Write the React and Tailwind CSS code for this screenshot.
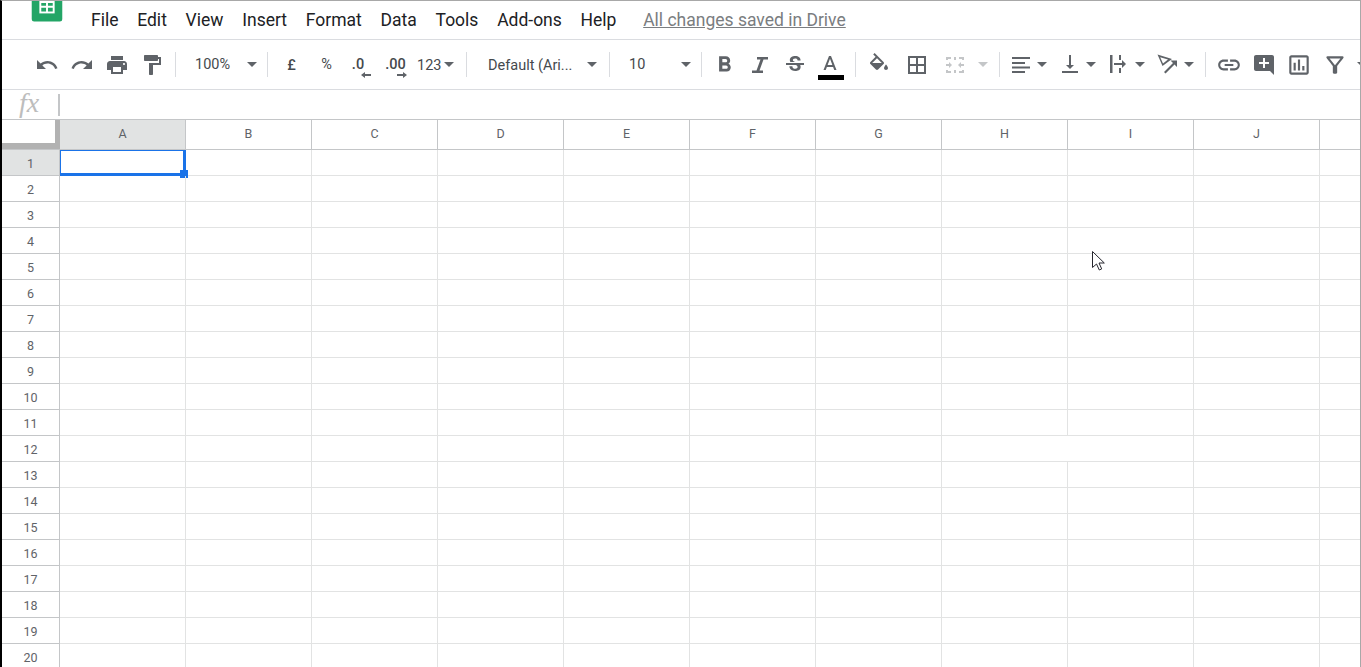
import React from "react";

const P = {
  undo: "M12.5 8c-2.65 0-5.05.99-6.9 2.6L2 7v9h9l-3.62-3.62c1.39-1.16 3.16-1.88 5.12-1.88 3.54 0 6.55 2.31 7.6 5.5l2.37-.78C21.08 11.03 17.15 8 12.5 8z",
  redo: "M18.4 10.6C16.55 8.99 14.15 8 11.5 8c-4.65 0-8.58 3.03-9.96 7.22L3.9 16c1.05-3.19 4.05-5.5 7.6-5.5 1.95 0 3.73.72 5.12 1.88L13 16h9V7l-3.6 3.6z",
  print: "M19 8H5c-1.66 0-3 1.34-3 3v6h4v4h12v-4h4v-6c0-1.66-1.34-3-3-3zm-3 11H8v-5h8v5zm3-7c-.55 0-1-.45-1-1s.45-1 1-1 1 .45 1 1-.45 1-1 1zm-1-9H6v4h12V3z",
  paint: "M18 4V3c0-.55-.45-1-1-1H5c-.55 0-1 .45-1 1v4c0 .55.45 1 1 1h12c.55 0 1-.45 1-1V6h1v4H9v11c0 .55.45 1 1 1h2c.55 0 1-.45 1-1v-9h8V4h-3z",
  bold: "M15.6 10.79c.97-.67 1.65-1.77 1.65-2.79 0-2.26-1.75-4-4-4H7v14h7.04c2.09 0 3.71-1.7 3.71-3.79 0-1.52-.86-2.82-2.15-3.42zM10 6.5h3c.83 0 1.5.67 1.5 1.5s-.67 1.5-1.5 1.5h-3v-3zm3.5 9H10v-3h3.5c.83 0 1.5.67 1.5 1.5s-.67 1.5-1.5 1.5z",
  italic: "M9 4v2.500h3.500L8.500 17.500H4V20h11v-2.500h-3.500l4-11H20V4z",
  strike: "M6.85 7.08C6.85 4.37 9.45 3 12.24 3c1.64 0 3 .49 3.9 1.28.77.65 1.46 1.73 1.46 3.24h-3.01c0-.31-.05-.59-.15-.85-.29-.86-1.2-1.28-2.25-1.28-1.86 0-2.34 1.02-2.34 1.7 0 .48.25.88.74 1.21.38.25.77.48 1.41.7H7.39c-.21-.34-.54-.89-.54-1.92zM21 12v-2H3v2h9.62c1.15.45 1.96.75 1.96 1.97 0 1-.81 1.67-2.28 1.67-1.54 0-2.93-.54-2.93-2.51H6.4c0 .55.08 1.13.24 1.58.81 2.29 3.29 3.3 5.67 3.3 2.27 0 5.3-.89 5.3-4.05 0-.3-.01-1.16-.48-1.94H21V12z",
  color: "M11 1 5.500 15h2.250l1.120-3h6.250l1.120 3h2.250L13 1h-2zm-1.380 9L12 3.670 14.380 10H9.620z",
  fill: "M16.56 8.94L7.62 0 6.21 1.41l2.38 2.38-5.15 5.15c-.59.59-.59 1.54 0 2.12l5.5 5.5c.29.29.68.44 1.06.44s.77-.15 1.06-.44l5.5-5.5c.59-.58.59-1.53 0-2.12zM5.21 10L10 5.21 14.79 10H5.21zM19 11.5s-2 2.17-2 3.5c0 1.1.9 2 2 2s2-.9 2-2c0-1.33-2-3.5-2-3.5z",
  borders: "M3 3v18h18V3H3zm8 16H5v-6h6v6zm0-8H5V5h6v6zm8 8h-6v-6h6v6zm0-8h-6V5h6v6z",
  merge: "M3 4h5v2H5v1H3zM16 4h5v3h-2V6h-3zM11 4h2v3h-2zM3 17h2v1h3v2H3zM19 17h2v3h-5v-2h3zM11 17h2v3h-2zM3 11h3V9l3 3-3 3v-2H3zM21 11h-3V9l-3 3 3 3v-2h3z",
  align: "M3 4h18v2H3zM3 9h13v2H3zM3 13.500h18v2H3zM3 18h13v2H3z",
  valign: "M16 13h-3V3h-2v10H8l4 4 4-4zM4 19v2h16v-2H4z",
  wrap: "M4 3h2.500v18H4zM13 3h2v5h-2zM13 16h2v5h-2zM8 11h8V8l4 4-4 4v-3H8z",
  rotate: "M2.500 1.500 17 6 7.500 13zM5.200 4.200 8 10.500 13 6.500zM9 19 18 10 15.500 7.500H22V14l-2.500-2.500L10.500 20.500z",
  link: "M3.9 12c0-1.71 1.39-3.1 3.1-3.1h4V7H7c-2.76 0-5 2.24-5 5s2.24 5 5 5h4v-1.9H7c-1.71 0-3.1-1.39-3.1-3.1zM8 13h8v-2H8v2zm9-6h-4v1.9h4c1.71 0 3.1 1.39 3.1 3.1s-1.39 3.1-3.1 3.1h-4V17h4c2.76 0 5-2.24 5-5s-2.24-5-5-5z",
  comment: "M21.99 4c0-1.1-.89-2-1.99-2H4c-1.1 0-2 .9-2 2v12c0 1.1.9 2 2 2h14l4 4-.01-18zM17 11h-4v4h-2v-4H7V9h4V5h2v4h4v2z",
  chart: "M19 3H5c-1.1 0-2 .9-2 2v14c0 1.1.9 2 2 2h14c1.1 0 2-.9 2-2V5c0-1.1-.9-2-2-2zm0 16H5V5h14v14zM7 10h2v7H7zm4-3h2v10h-2zm4 6h2v4h-2z",
  filter: "M7 6h10l-5.01 6.3L7 6zm-2.75-.39C6.27 8.2 10 13 10 13v6c0 .55.45 1 1 1h2c.55 0 1-.45 1-1v-6s3.72-4.8 5.74-7.39c.51-.66.04-1.61-.79-1.61H5.04c-.83 0-1.3.95-.79 1.61z",
};

function Icon({ d, className = "w-6 h-6" }) {
  return (
    <svg viewBox="0 0 24 24" className={"shrink-0 fill-[#5f6368] " + className}>
      <path d={d} />
    </svg>
  );
}

function Btn({ d, className = "w-[35px]", iconClass = "w-6 h-6" }) {
  return (
    <div className={"h-full shrink-0 flex items-center justify-center " + className}>
      <Icon d={d} className={iconClass} />
    </div>
  );
}

function Caret({ className = "", disabled = false }) {
  return (
    <svg viewBox="0 0 10 5" className={"w-[10px] h-[5px] shrink-0 " + (disabled ? "fill-[#c4c6c8] " : "fill-[#5f6368] ") + className}>
      <path d="M0 0h10L5 5z" />
    </svg>
  );
}

function Sep({ className = "" }) {
  return <div className={"w-px h-[25px] shrink-0 bg-[#dadce0] " + className} />;
}

function Txt({ children, className = "" }) {
  return (
    <div className={"w-[35px] h-full shrink-0 flex items-center justify-center text-[14.500px] text-[#45494d] " + className}>
      {children}
    </div>
  );
}

const MENU = ["File", "Edit", "View", "Insert", "Format", "Data", "Tools", "Add-ons", "Help"];
const COLS = ["A", "B", "C", "D", "E", "F", "G", "H", "I", "J"];
const ROWS = Array.from({ length: 20 }, (_, i) => i + 1);

function Row({ n }) {
  return (
    <div className="flex h-[26px] shrink-0 border-b border-[#e2e3e3]">
      <div
        className={
          "w-[58px] shrink-0 -mb-px pt-[4px] flex items-center justify-center border-r border-b border-[#c4c6c8] text-[12.500px] text-[#5f6368] " +
          (n === 1 ? "bg-[#e1e3e3]" : "bg-white")
        }
      >
        {n}
      </div>
      {COLS.map((c) => {
        if (n === 12 && c === "I") return null;
        return (
          <div
            key={c}
            className={
              "relative shrink-0 border-r border-[#e2e3e3] " +
              (n === 12 && c === "H" ? "w-[252px]" : "w-[126px]")
            }
          >
            {n === 1 && c === "A" ? (
              <div className="absolute left-0 top-0 w-[126px] h-[26px] border-t border-l border-r-[3px] border-b-[3px] border-[#1a73e8]">
                <div className="absolute right-[-5px] bottom-[-5px] w-2 h-2 bg-[#1a73e8]" />
              </div>
            ) : null}
          </div>
        );
      })}
    </div>
  );
}

export default function App() {
  return (
    <div className="relative h-screen w-full overflow-hidden bg-white flex flex-col border-l-2 border-l-black border-r border-r-[#a8a8a8] border-t border-t-[#a8a8a8] font-['Roboto',sans-serif]">
      {/* Menu bar */}
      <div className="h-[39px] shrink-0 border-b border-[#dadce0] flex items-start overflow-hidden">
        <svg viewBox="0 0 32 22" className="w-8 h-[21px] shrink-0 ml-[29px]">
          <path d="M0 0h32v19a2.500 2.500 0 0 1-2.500 2.500h-27A2.500 2.500 0 0 1 0 19z" fill="#23a566" />
          <path d="M8 0h16v13H8z" fill="#fff" />
          <path d="M10 2h5v3h-5zM17 2h5v3h-5zM10 7h5v4h-5zM17 7h5v4h-5z" fill="#23a566" />
        </svg>
        <div className="flex items-center h-full ml-[28px] text-[17.500px] text-[#202124] gap-[18.750px]">
          {MENU.map((m) => (
            <span key={m}>{m}</span>
          ))}
          <span className="ml-[8px] text-[#7a7d80] underline">All changes saved in Drive</span>
        </div>
      </div>

      {/* Toolbar */}
      <div className="h-[50px] shrink-0 border-b border-[#dadce0] flex items-center overflow-hidden pl-[27px] text-[#45494d]">
        <Btn d={P.undo} />
        <Btn d={P.redo} />
        <Btn d={P.print} />
        <Btn d={P.paint} />
        <Sep className="ml-[6px]" />
        <div className="w-[91px] h-full shrink-0 flex items-center pl-[19px] text-[14.500px]">
          <span className="w-[52px]">100%</span>
          <Caret />
        </div>
        <Sep />
        <Txt className="ml-[6px] font-medium pt-[2px]">£</Txt>
        <Txt className="pt-[1px]">%</Txt>
        <Txt className="relative">
          <span className="font-medium mr-[7px]">.0</span>
          <svg viewBox="0 0 10 6" className="absolute left-[17px] top-[32px] w-[10px] h-[6px] fill-[#5f6368]">
            <path d="M0 3 4 0v2h6v2H4v2z" />
          </svg>
        </Txt>
        <Txt className="relative">
          <span className="font-medium mr-[2px]">.00</span>
          <svg viewBox="0 0 10 6" className="absolute left-[18px] top-[32px] w-[10px] h-[6px] fill-[#5f6368]">
            <path d="M10 3 6 0v2H0v2h6v2z" />
          </svg>
        </Txt>
        <div className="w-[52px] h-full shrink-0 flex items-center pl-[3px] text-[14.500px]">
          <span className="w-[27px] pt-[2px]">123</span>
          <Caret />
        </div>
        <Sep />
        <div className="w-[142px] h-full shrink-0 flex items-center pl-[21px] text-[14.500px]">
          <span className="w-[99px] whitespace-nowrap pt-[2px]">Default (Ari...</span>
          <Caret />
        </div>
        <Sep />
        <div className="w-[91px] h-full shrink-0 flex items-center pl-[19px] text-[14.500px]">
          <span className="w-[52px]">10</span>
          <Caret />
        </div>
        <Sep />
        <Btn d={P.bold} className="w-[35px] ml-[5px]" iconClass="w-[27px] h-[26px]" />
        <Btn d={P.italic} />
        <Btn d={P.strike} />
        <div className="relative w-[35px] h-full shrink-0 flex items-center justify-center">
          <Icon d={P.color} className="w-6 h-6 mt-[5px] ml-px" />
          <div className="absolute left-[6px] top-[35px] w-[26px] h-[5px] bg-black" />
        </div>
        <Sep className="ml-[8px]" />
        <Btn d={P.fill} className="w-[35px] ml-[5px]" />
        <Btn d={P.borders} className="w-[35px] ml-[3px]" />
        <Btn d={P.merge} className="w-[35px] ml-[3px]" iconClass="w-6 h-6 fill-[#c4c6c8]" />
        <Caret disabled className="ml-[6px]" />
        <Sep className="ml-[11px]" />
        <Btn d={P.align} className="w-6 ml-[9px]" />
        <Caret className="ml-[4px]" />
        <Btn d={P.valign} className="w-6 ml-[11px]" iconClass="w-6 h-6 -mt-[2px]" />
        <Caret className="ml-[4px]" />
        <Btn d={P.wrap} className="w-6 ml-[10px]" iconClass="w-6 h-6 -mt-[2px]" />
        <Caret className="ml-[5px]" />
        <Btn d={P.rotate} className="w-6 ml-[10px]" />
        <Caret className="ml-[5px]" />
        <Sep className="ml-[11px]" />
        <Btn d={P.link} className="w-[35px] ml-[5px]" iconClass="w-[26px] h-[26px]" />
        <Btn d={P.comment} />
        <Btn d={P.chart} iconClass="w-[26px] h-[26px]" />
        <Btn d={P.filter} iconClass="w-[26px] h-[26px] ml-[2px]" />
        <Caret className="ml-[6px]" />
      </div>

      {/* Formula bar */}
      <div className="h-[30px] shrink-0 border-b border-[#c4c6c8] flex items-center">
        <span className="ml-[17px] w-[39px] -mt-[3px] font-['Liberation_Serif',serif] italic text-[28px] leading-none text-[#bdbdbd]">fx</span>
        <div className="w-[2px] h-[22px] bg-[#c4c6c8]" />
      </div>

      {/* Column headers */}
      <div className="flex h-[30px] shrink-0 border-b border-[#c4c6c8]">
        <div className="w-[58px] shrink-0 border-r-[5px] border-b-[6px] border-[#b2b2b2] bg-white" />
        {COLS.map((c, i) => (
          <div
            key={c}
            className={
              "w-[126px] shrink-0 flex items-center justify-center border-r border-[#c4c6c8] text-[12.500px] text-[#5f6368] " +
              (i === 0 ? "bg-[#e1e3e3]" : "bg-white")
            }
          >
            {c}
          </div>
        ))}
      </div>

      {/* Grid */}
      <div className="flex flex-col">
        {ROWS.map((n) => (
          <Row key={n} n={n} />
        ))}
      </div>

      {/* Mouse pointer */}
      <svg viewBox="0 0 13 20" className="absolute left-[1090px] top-[250px] w-[13px] h-5">
        <path d="M.5.5v16l4-3.500 2.800 6 2.400-1.100-2.700-5.900h5.300z" fill="#fff" stroke="#26262e" strokeWidth="1" />
      </svg>
    </div>
  );
}
